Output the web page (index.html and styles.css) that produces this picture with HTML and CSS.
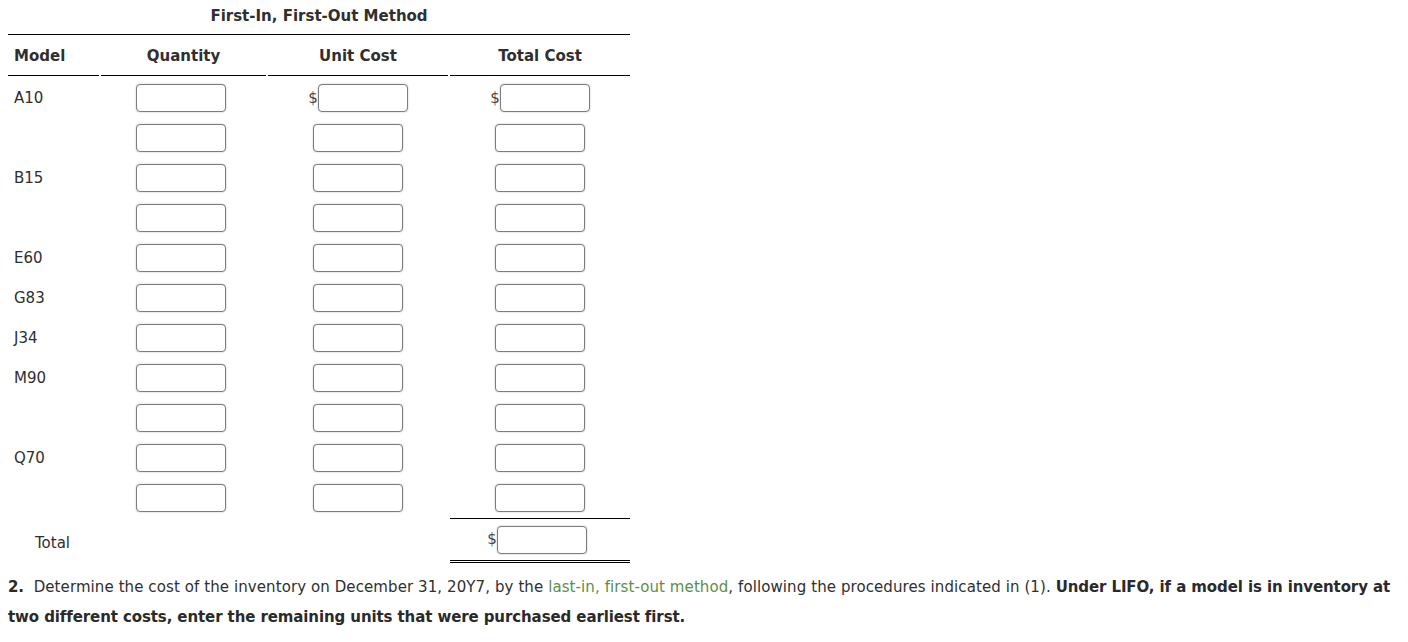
FILE: index.html
```html
<!DOCTYPE html>
<html>
<head>
<meta charset="utf-8">
<link rel="stylesheet" href="styles.css">
</head>
<body>
<div class="fifo">
  <div class="title">First-In, First-Out Method</div>
  <div class="grid">
    <div class="hd left">Model</div>
    <div class="hd">Quantity</div>
    <div class="hd">Unit Cost</div>
    <div class="hd">Total Cost</div>

    <div class="lbl">A10</div>
    <div class="cell qty"><input class="box"></div>
    <div class="cell"><span class="dol">$</span><input class="box"></div>
    <div class="cell"><span class="dol">$</span><input class="box"></div>

    <div class="lbl"></div>
    <div class="cell qty"><input class="box"></div>
    <div class="cell"><input class="box"></div>
    <div class="cell"><input class="box"></div>

    <div class="lbl">B15</div>
    <div class="cell qty"><input class="box"></div>
    <div class="cell"><input class="box"></div>
    <div class="cell"><input class="box"></div>

    <div class="lbl"></div>
    <div class="cell qty"><input class="box"></div>
    <div class="cell"><input class="box"></div>
    <div class="cell"><input class="box"></div>

    <div class="lbl">E60</div>
    <div class="cell qty"><input class="box"></div>
    <div class="cell"><input class="box"></div>
    <div class="cell"><input class="box"></div>

    <div class="lbl">G83</div>
    <div class="cell qty"><input class="box"></div>
    <div class="cell"><input class="box"></div>
    <div class="cell"><input class="box"></div>

    <div class="lbl">J34</div>
    <div class="cell qty"><input class="box"></div>
    <div class="cell"><input class="box"></div>
    <div class="cell"><input class="box"></div>

    <div class="lbl">M90</div>
    <div class="cell qty"><input class="box"></div>
    <div class="cell"><input class="box"></div>
    <div class="cell"><input class="box"></div>

    <div class="lbl"></div>
    <div class="cell qty"><input class="box"></div>
    <div class="cell"><input class="box"></div>
    <div class="cell"><input class="box"></div>

    <div class="lbl">Q70</div>
    <div class="cell qty"><input class="box"></div>
    <div class="cell"><input class="box"></div>
    <div class="cell"><input class="box"></div>

    <div class="lbl"></div>
    <div class="cell qty"><input class="box"></div>
    <div class="cell"><input class="box"></div>
    <div class="cell"><input class="box"></div>

    <div class="lbl total-lbl">Total</div>
    <div class="cell tot-row"></div>
    <div class="cell tot-row"></div>
    <div class="cell tot-row tot-cell"><span class="dol">$</span><input class="box"></div>
  </div>
</div>
<p class="para"><b>2.</b>&nbsp; Determine the cost of the inventory on December 31, 20Y7, by the <span class="link">last-in, first-out method</span>, following the procedures indicated in (1). <b>Under LIFO, if a model is in inventory at two different costs, enter the remaining units that were purchased earliest first.</b></p>
</body>
</html>
```

FILE: styles.css
```css
html, body {
  background: #fff;
}
body {
  margin: 0 8px;
  padding-top: 7px;
  font-family: "DejaVu Sans", Verdana, sans-serif;
  font-size: 15px;
  color: #2f2f2f;
}
.fifo {
  width: 622px;
}
.title {
  text-align: center;
  font-weight: bold;
  line-height: 18px;
  padding-bottom: 9px;
  border-bottom: 1px solid #000;
}
.grid {
  display: grid;
  grid-template-columns: 91px 165px 180px 180px;
  column-gap: 2px;
}
.hd {
  font-weight: bold;
  text-align: center;
  height: 40px;
  line-height: 43px;
  border-bottom: 1px solid #000;
  margin-bottom: 2px;
}
.hd.left {
  text-align: left;
  padding-left: 6px;
}
.lbl {
  height: 40px;
  display: flex;
  align-items: center;
  padding-left: 6px;
  font-size: 15px;
}
.total-lbl {
  padding-left: 27px;
  height: 41px;
  padding-top: 9px;
  box-sizing: border-box;
}
.cell {
  height: 40px;
  display: flex;
  align-items: center;
  justify-content: center;
}
.cell.qty {
  padding-right: 6px;
}
.tot-row {
  height: 41px;
  box-sizing: border-box;
}
.tot-cell {
  border-top: 1px solid #000;
  border-bottom: 3px double #000;
  height: 45px;
  padding-right: 6px;
}
.dol {
  font-size: 15px;
  color: #444;
  line-height: 1;
}
.box {
  box-sizing: border-box;
  width: 90px;
  height: 28px;
  margin: 0;
  padding: 0 4px;
  border: 1px solid #7c7c7c;
  border-radius: 4px;
  background: #fff;
  box-shadow: 0 0 2px rgba(0, 0, 0, 0.25);
  font: inherit;
}
.para {
  margin: 9px 0 0;
  line-height: 30px;
  font-size: 15px;
  letter-spacing: 0.09px;
}
.para b {
  color: #2a2a2a;
  letter-spacing: -0.1px;
}
.link {
  color: #5a8f48;
}
```
